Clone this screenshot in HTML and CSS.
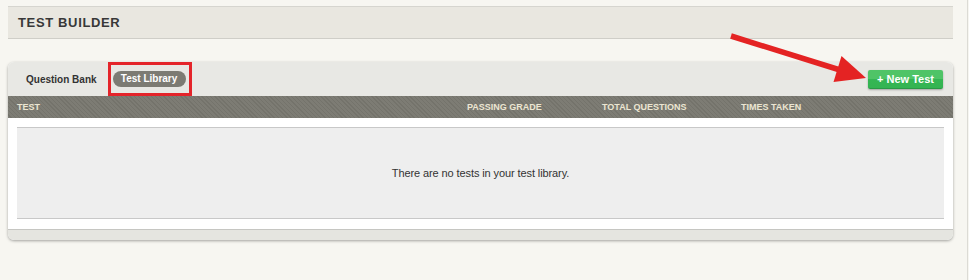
FILE: index.html
```html
<!DOCTYPE html>
<html>
<head>
<meta charset="utf-8">
<link rel="stylesheet" href="styles.css">
</head>
<body>
<div class="page">
  <div class="titlebar"><h1 class="title">TEST BUILDER</h1></div>
  <div class="panel">
    <div class="tabs">
      <a class="tab">Question Bank</a>
      <span class="highlight"><a class="tab active">Test Library</a></span>
      <button class="new-test">+ New Test</button>
    </div>
    <div class="thead">
      <span>TEST</span>
      <span>PASSING GRADE</span>
      <span>TOTAL QUESTIONS</span>
      <span>TIMES TAKEN</span>
    </div>
    <div class="tbody">
      <div class="empty">There are no tests in your test library.</div>
    </div>
    <div class="pfoot"></div>
  </div>
  <svg class="arrow" width="969" height="120" viewBox="0 0 969 120">
    <line x1="731" y1="36" x2="840" y2="70" stroke="#e42323" stroke-width="5.5"/>
    <polygon points="866,78 833.5,82 841.5,56" fill="#e42323"/>
  </svg>
</div>
</body>
</html>
```
FILE: styles.css
```css
html, body {
  margin: 0;
  padding: 0;
  background: #f7f6f1;
}
body {
  font-family: "Liberation Sans", Arial, sans-serif;
  color: #333;
}
.page {
  position: relative;
  width: 945px;
  min-height: 280px;
  box-sizing: border-box;
  padding: 6px 0 0 0;
  margin-left: 8px;
}
.page::after {
  content: "";
  position: absolute;
  left: 959px;
  top: 0;
  width: 1px;
  height: 280px;
  background: #dcdbd5;
}
.titlebar {
  height: 31px;
  background: #e9e7e0;
  border-top: 1px solid #d6d5cf;
  border-bottom: 1px solid #cfcec8;
  display: flex;
  align-items: center;
  padding-left: 10px;
}
.title {
  margin: 0;
  font-size: 13px;
  font-weight: bold;
  letter-spacing: 0.65px;
  color: #383838;
}
.panel {
  margin-top: 23px;
  background: #fff;
  border-radius: 6px;
  box-shadow: 0 1px 3px rgba(0,0,0,0.35);
  overflow: hidden;
}
.tabs {
  height: 34px;
  background: #e8e8e4;
  display: flex;
  align-items: center;
  padding-left: 18px;
  padding-right: 10px;
}
.tab {
  font-size: 10px;
  font-weight: bold;
  color: #333;
  text-decoration: none;
}
.highlight {
  margin-left: 11px;
  border: 3px solid #e4242a;
  padding: 6px 3px 6px 2px;
  display: flex;
  height: 16px;
}
.tab.active {
  background: #7c7b73;
  color: #fff;
  border-radius: 8px;
  height: 16px;
  line-height: 16px;
  width: 73px;
  text-align: center;
}
.new-test {
  margin-left: auto;
  width: 75px;
  height: 19px;
  border: 0;
  border-bottom: 1px solid #2a9a45;
  border-radius: 2px;
  background: linear-gradient(#4fc467, #4fc467 50%, #35b653 50%, #34b452);
  box-shadow: 0 1px 2px rgba(0,0,0,0.3);
  color: #fff;
  font-family: "Liberation Sans", Arial, sans-serif;
  font-size: 11px;
  font-weight: bold;
  padding: 0;
}
.thead {
  height: 22px;
  display: grid;
  grid-template-columns: 450px 135px 139px 1fr;
  align-items: center;
  padding-left: 9px;
  background: repeating-linear-gradient(45deg, #7d7c74 0, #7d7c74 2px, #74736b 2px, #74736b 3px);
  color: #ece6d2;
  font-size: 9px;
  font-weight: bold;
}
.tbody {
  background: #fff;
  padding: 9px 9px 10px 9px;
  border-bottom: 1px solid #c6c6c2;
}
.empty {
  height: 90px;
  background: #eeeeee;
  border-top: 1px solid #c8c8c8;
  border-bottom: 1px solid #c8c8c8;
  display: flex;
  align-items: center;
  justify-content: center;
  font-size: 11px;
  letter-spacing: -0.1px;
  color: #333;
}
.pfoot {
  height: 10px;
  background: #e5e5e0;
}
.arrow {
  position: absolute;
  left: -8px;
  top: 0;
  pointer-events: none;
}
```
